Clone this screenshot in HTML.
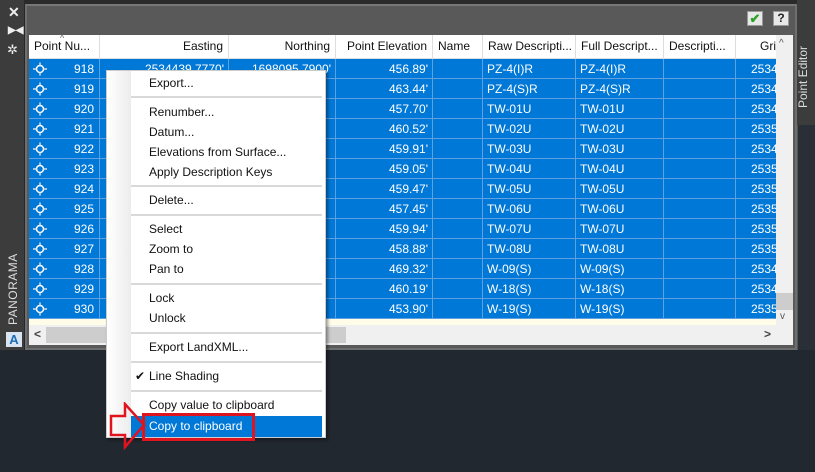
<!DOCTYPE html>
<html><head><meta charset="utf-8"><style>
*{margin:0;padding:0;box-sizing:border-box}
body{width:815px;height:472px;background:#222830;position:relative;overflow:hidden;font-family:"Liberation Sans",sans-serif;font-size:12px}
.abs{position:absolute}
.row{position:absolute;left:29px;width:747px;height:20px;background:#0078d7;border-bottom:1px solid #5ea0e0;color:#fff;overflow:hidden}
.c{position:absolute;top:0;height:20px;line-height:20px;border-right:1px solid #5ea0e0;white-space:nowrap;overflow:hidden;padding:0 4px}
.r{text-align:right}
.h{position:absolute;top:0;height:23px;line-height:23px;border-right:1px solid #ddd;white-space:nowrap;overflow:hidden;padding:0 5px;color:#111;background:#fff}
.mi{position:absolute;left:149px;color:#111;font-size:12px;line-height:14px}
.sep{position:absolute;left:131px;width:191px;height:2px;background:#d9d9d9}
</style></head><body>
<div class="abs" style="left:0;top:0;width:815px;height:4px;background:#2a2a2a"></div>
<div class="abs" style="left:0;top:0;width:24px;height:350px;background:#3c3c3c"></div>
<div class="abs" style="left:8px;top:4px;color:#eee;font-size:14px;font-weight:bold">✕</div>
<div class="abs" style="left:8px;top:25px;color:#eee;font-size:10px;font-weight:bold">▶◀</div>
<div class="abs" style="left:7px;top:42px;color:#eee;font-size:13px">✲</div>
<div class="abs" style="left:-22px;top:283px;width:70px;transform:rotate(-90deg);color:#ddd;font-size:12px;letter-spacing:0.5px">PANORAMA</div>
<div class="abs" style="left:6px;top:332px;width:16px;height:15px;background:#d8e4ef;color:#1a6db8;font-weight:bold;font-size:13px;line-height:15px;text-align:center">A</div>
<div class="abs" style="left:25px;top:4px;width:772px;height:346px;background:#595959;border:2px solid #6e6e6e;border-top-color:#777"></div>
<div class="abs" style="left:747px;top:11px;width:16px;height:15px;background:#e8e8e8;border:1px solid #999;color:#2aa32a;font-size:13px;line-height:13px;text-align:center;font-weight:bold">✔</div>
<div class="abs" style="left:773px;top:11px;width:16px;height:15px;background:#e8e8e8;border:1px solid #999;color:#222;font-size:12px;line-height:13px;text-align:center;font-weight:bold">?</div>
<div class="abs" style="left:797px;top:0;width:18px;height:125px;background:#3c3c3c"></div>
<div class="abs" style="left:797px;top:125px;width:18px;height:225px;background:#2a2f37;border-left:1px solid #555"></div>
<div class="abs" style="left:768px;top:66px;width:70px;transform:rotate(-90deg);color:#ddd;font-size:12px">Point Editor</div>
<div class="abs" style="left:29px;top:35px;width:764px;height:310px;background:#f0f0f0"></div>
<div class="abs" style="left:29px;top:35px;width:747px;height:24px;background:#fff;border-bottom:1px solid #ddd;overflow:hidden">
<div class="h" style="left:0;width:71px">Point Nu...</div>
<div class="h r" style="left:71px;width:129px">Easting</div>
<div class="h r" style="left:200px;width:107px">Northing</div>
<div class="h r" style="left:307px;width:97px">Point Elevation</div>
<div class="h" style="left:404px;width:50px">Name</div>
<div class="h" style="left:454px;width:93px">Raw Descripti...</div>
<div class="h" style="left:547px;width:88px">Full Descript...</div>
<div class="h" style="left:635px;width:72px">Descripti...</div>
<div class="h" style="left:707px;width:60px;padding-left:24px">Grid</div>
</div>
<div class="abs" style="left:60px;top:33px;font-size:9px;color:#666">^</div>
<div id="rows"></div>
<div class="abs" style="left:29px;top:319px;width:747px;height:6px;background:#fffde8"></div>
<div class="abs" style="left:776px;top:35px;width:17px;height:290px;background:#f0f0f0"></div>
<div class="abs" style="left:779px;top:38px;color:#555;font-size:10px">^</div>
<div class="abs" style="left:776px;top:293px;width:17px;height:17px;background:#cdcdcd"></div>
<div class="abs" style="left:780px;top:311px;color:#555;font-size:10px">v</div>
<div class="abs" style="left:29px;top:325px;width:764px;height:20px;background:#f0f0f0"></div>
<div class="abs" style="left:46px;top:327px;width:300px;height:16px;background:#cdcdcd"></div>
<div class="abs" style="left:34px;top:327px;color:#444;font-size:12px;font-weight:bold">&lt;</div>
<div class="abs" style="left:764px;top:327px;color:#444;font-size:12px;font-weight:bold">&gt;</div>
<div class="abs" style="left:106px;top:70px;width:220px;height:368px;background:#fff;border:1px solid #ccc;box-shadow:2px 2px 3px rgba(0,0,0,.4)"></div>
<div class="abs" style="left:107px;top:71px;width:24px;height:366px;background:linear-gradient(90deg,#fff,#ececec)"></div>
<div class="mi" style="top:76px">Export...</div>
<div class="sep" style="top:96px"></div>
<div class="mi" style="top:105px">Renumber...</div>
<div class="mi" style="top:125px">Datum...</div>
<div class="mi" style="top:145px">Elevations from Surface...</div>
<div class="mi" style="top:165px">Apply Description Keys</div>
<div class="sep" style="top:185px"></div>
<div class="mi" style="top:193px">Delete...</div>
<div class="sep" style="top:214px"></div>
<div class="mi" style="top:222px">Select</div>
<div class="mi" style="top:242px">Zoom to</div>
<div class="mi" style="top:262px">Pan to</div>
<div class="sep" style="top:283px"></div>
<div class="mi" style="top:291px">Lock</div>
<div class="mi" style="top:311px">Unlock</div>
<div class="sep" style="top:332px"></div>
<div class="mi" style="top:340px">Export LandXML...</div>
<div class="sep" style="top:361px"></div>
<div class="abs" style="left:135px;top:369px;font-size:12px;color:#111">✔</div>
<div class="mi" style="top:369px">Line Shading</div>
<div class="sep" style="top:390px"></div>
<div class="mi" style="top:398px">Copy value to clipboard</div>
<div class="abs" style="left:131px;top:416px;width:191px;height:21px;background:#0078d7"></div>
<div class="mi" style="top:419px;color:#fff">Copy to clipboard</div>
<div class="abs" style="left:142px;top:413px;width:113px;height:28px;border:3px solid #e0141e"></div>
<svg class="abs" style="left:108px;top:402px" width="40" height="48"><path d="M3 14 H17 V2 L36 23 L17 45 V33 H3 Z" fill="none" stroke="#e0141e" stroke-width="2.5"/></svg>
<script>
var d=[[918,"456.89'","PZ-4(I)R","25344"],[919,"463.44'","PZ-4(S)R","25344"],[920,"457.70'","TW-01U","25349"],[921,"460.52'","TW-02U","25350"],[922,"459.91'","TW-03U","25349"],[923,"459.05'","TW-04U","25350"],[924,"459.47'","TW-05U","25354"],[925,"457.45'","TW-06U","25354"],[926,"459.94'","TW-07U","25354"],[927,"458.88'","TW-08U","25354"],[928,"469.32'","W-09(S)","25346"],[929,"460.19'","W-18(S)","25348"],[930,"453.90'","W-19(S)","25359"]];
var ic='<svg style="position:absolute;left:3px;top:3px" width="16" height="14"><circle cx="8" cy="7" r="3.5" fill="none" stroke="#fff" stroke-width="1.5"/><path d="M1 7H4.5M11.5 7H15M8 0.5V3.5M8 10.5V13.5" stroke="#ddd" stroke-width="1.5"/></svg>';
var h="";d.forEach(function(r,i){var t=59+i*20;h+='<div class="row" style="top:'+t+'px">'+
'<div class="c" style="left:0;width:71px">'+ic+'<span style="position:absolute;right:5px">'+r[0]+'</span></div>'+
'<div class="c r" style="left:71px;width:129px">'+(i==0?"2534439.7770'":"")+'</div>'+
'<div class="c r" style="left:200px;width:107px">'+(i==0?"1698095.7900'":"")+'</div>'+
'<div class="c r" style="left:307px;width:97px">'+r[1]+'</div>'+
'<div class="c" style="left:404px;width:50px"></div>'+
'<div class="c" style="left:454px;width:93px">'+r[2]+'</div>'+
'<div class="c" style="left:547px;width:88px">'+r[2]+'</div>'+
'<div class="c" style="left:635px;width:72px"></div>'+
'<div class="c" style="left:707px;width:60px;border:none;padding-left:15px">'+r[3]+'</div></div>';});
document.getElementById("rows").innerHTML=h;
</script>
</body></html>
